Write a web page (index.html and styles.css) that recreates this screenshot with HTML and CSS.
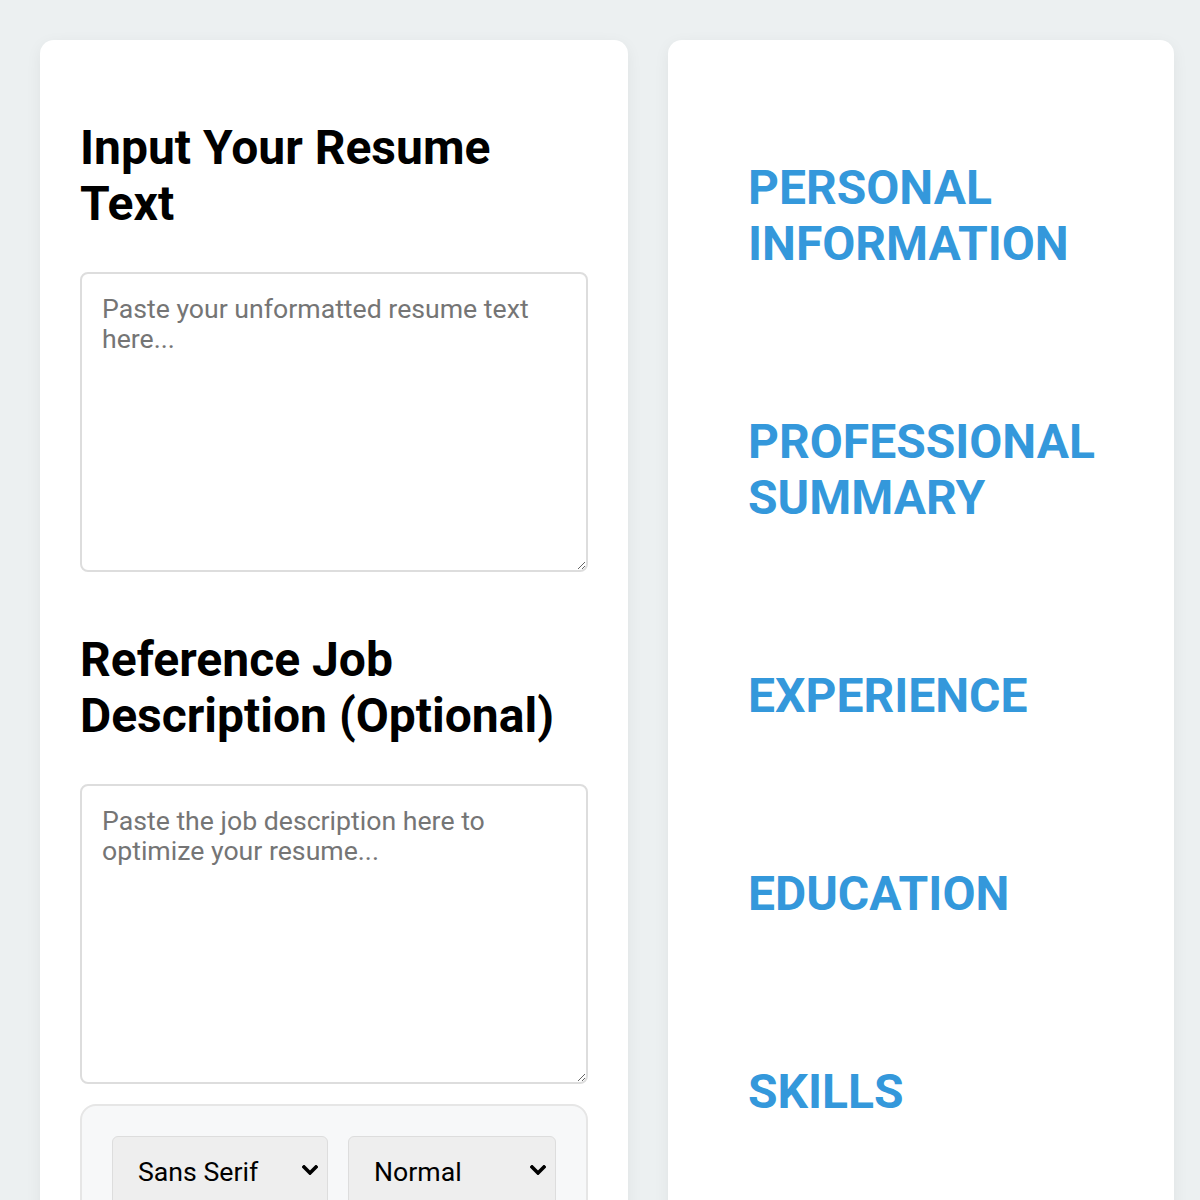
FILE: index.html
```html
<!DOCTYPE html>
<html lang="en">
<head>
  <meta charset="UTF-8" />
  <meta name="viewport" content="width=device-width, initial-scale=1.0"/>
  <title>Resume Formatter</title>
  <link rel="stylesheet" href="styles.css">
</head>
<body>
  <div class="layout">
    <div class="card editor">
      <h2 class="section-title">Input Your Resume Text</h2>
      <textarea class="text-input" placeholder="Paste your unformatted resume text here..."></textarea>

      <h2 class="section-title second">Reference Job Description (Optional)</h2>
      <textarea class="text-input" placeholder="Paste the job description here to optimize your resume..."></textarea>

      <div class="options">
        <div class="select-wrap font-select">
          <select>
            <option>Sans Serif</option>
            <option>Serif</option>
            <option>Monospace</option>
          </select>
          <svg class="chevron" viewBox="0 0 16 10" width="16" height="10">
            <path d="M2 2 L8 8 L14 2" fill="none" stroke="#000" stroke-width="3.6" stroke-linecap="square"/>
          </svg>
        </div>
        <div class="select-wrap size-select">
          <select>
            <option>Normal</option>
            <option>Small</option>
            <option>Large</option>
          </select>
          <svg class="chevron" viewBox="0 0 16 10" width="16" height="10">
            <path d="M2 2 L8 8 L14 2" fill="none" stroke="#000" stroke-width="3.6" stroke-linecap="square"/>
          </svg>
        </div>
      </div>
    </div>

    <div class="card preview">
      <h2 class="preview-heading">PERSONAL INFORMATION</h2>
      <h2 class="preview-heading">PROFESSIONAL SUMMARY</h2>
      <h2 class="preview-heading">EXPERIENCE</h2>
      <h2 class="preview-heading">EDUCATION</h2>
      <h2 class="preview-heading">SKILLS</h2>
    </div>
  </div>
</body>
</html>
```

FILE: styles.css
```css
body {
  margin: 0;
  background: #ecf0f1;
  font-family: Roboto, 'Noto Sans', sans-serif;
  color: #000;
}

.layout {
  display: flex;
  align-items: flex-start;
  gap: 40px;
  padding: 40px 26px 0 40px;
}

.card {
  background: #fff;
  border-radius: 14px;
  box-shadow: 0 4px 16px rgba(0, 0, 0, 0.06);
  box-sizing: border-box;
}

.editor {
  width: 588px;
  padding: 80px 40px 40px;
}

.section-title {
  margin: 0 0 40px;
  font-size: 48px;
  font-weight: 700;
  line-height: 56px;
}

.section-title.second {
  margin-top: 60px;
}

.text-input {
  display: block;
  width: 100%;
  height: 300px;
  box-sizing: border-box;
  padding: 20px;
  border: 2px solid #ddd;
  border-radius: 8px;
  font-family: Roboto, 'Noto Sans', sans-serif;
  font-size: 26.67px;
  line-height: 30px;
  color: #333;
  resize: vertical;
}

.text-input::placeholder {
  color: #757575;
}

.options {
  margin-top: 20px;
  padding: 30px;
  background: #f7f8f9;
  border: 2px solid #e6e6e6;
  border-radius: 16px;
  display: flex;
  gap: 20px;
  height: 200px;
}

.select-wrap {
  position: relative;
  height: 72px;
}

.select-wrap select {
  appearance: none;
  -webkit-appearance: none;
  width: 100%;
  height: 100%;
  box-sizing: border-box;
  padding: 0 40px 0 25px;
  background: #eeeeee;
  border: 1px solid #dddddd;
  border-radius: 6px;
  font-family: Roboto, 'Noto Sans', sans-serif;
  font-size: 26.67px;
  color: #000;
}

.chevron {
  position: absolute;
  right: 10px;
  top: 29px;
  pointer-events: none;
}

.font-select {
  width: 216px;
}

.size-select {
  width: 208px;
}

.preview {
  width: 506px;
  min-height: 1300px;
  padding: 120px 40px 40px 80px;
  display: flex;
  flex-direction: column;
  gap: 142px;
}

.preview-heading {
  margin: 0;
  font-size: 48px;
  font-weight: 700;
  line-height: 56px;
  color: #3498db;
}
```
